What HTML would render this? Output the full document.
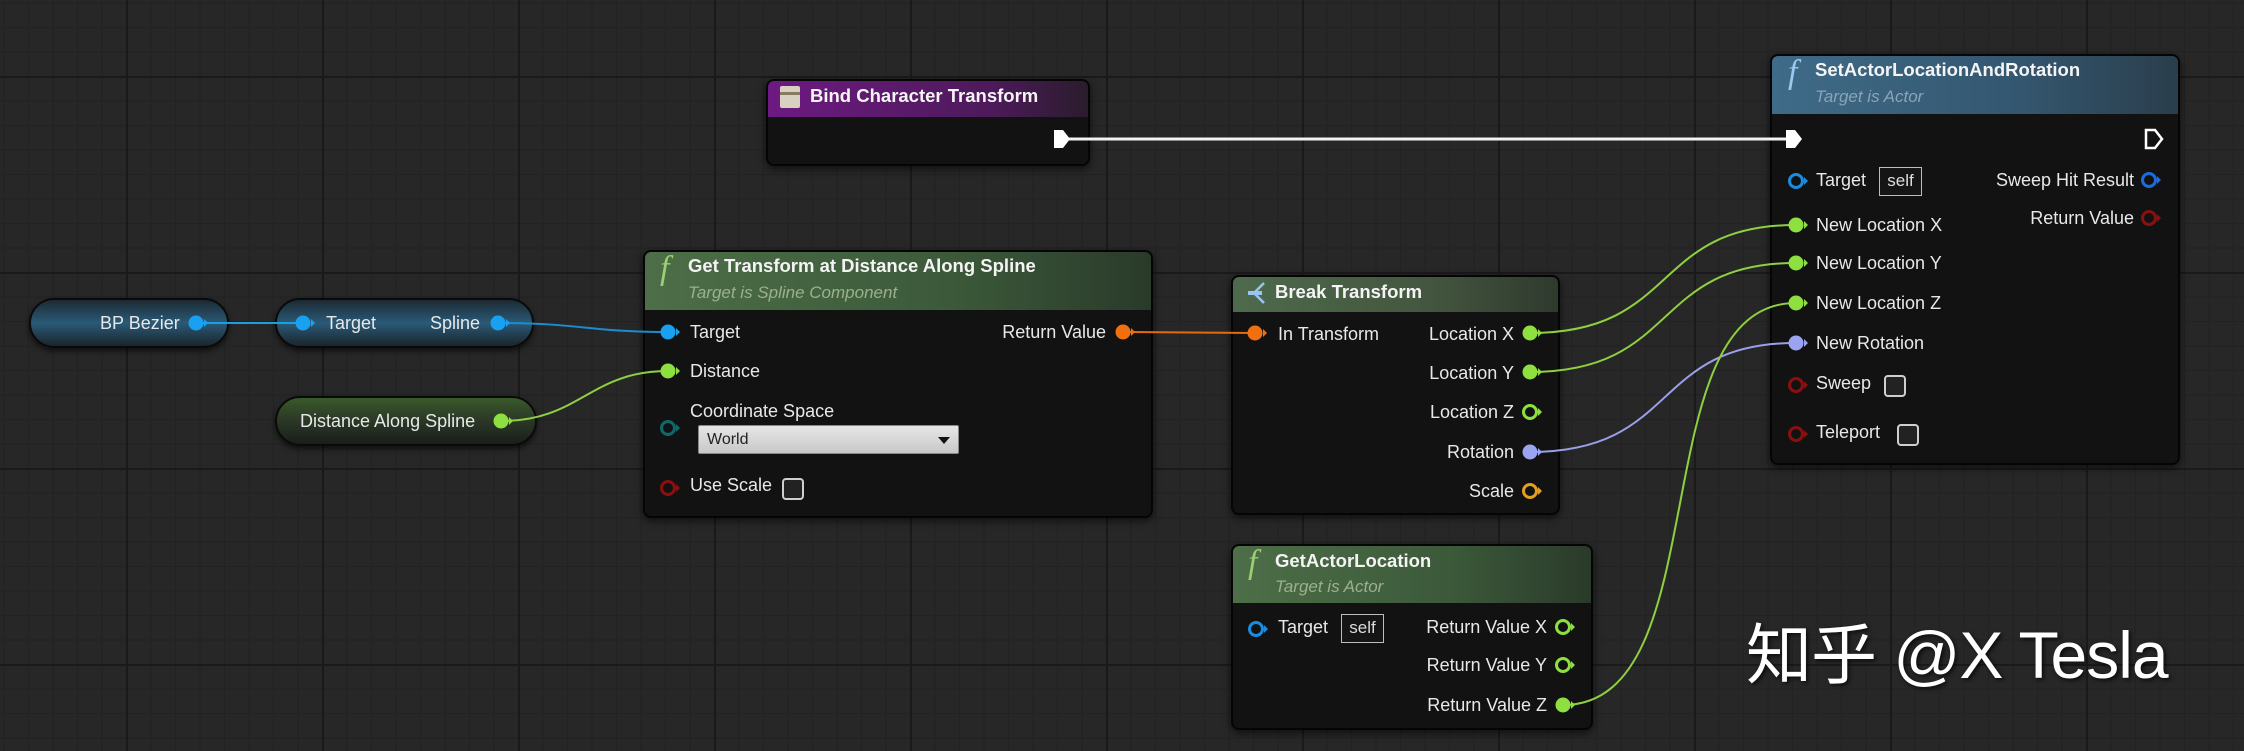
<!DOCTYPE html>
<html><head><meta charset="utf-8"><style>
*{margin:0;padding:0;box-sizing:border-box}
body{width:2244px;height:751px;overflow:hidden;background:#272727;font-family:"Liberation Sans",sans-serif;position:relative}
#grid{position:absolute;inset:0;
background-image:
linear-gradient(#1a1a1a 2px,transparent 2px),
linear-gradient(90deg,#1a1a1a 2px,transparent 2px),
linear-gradient(#222 1px,transparent 1px),
linear-gradient(90deg,#222 1px,transparent 1px);
background-size:196px 196px,196px 196px,24.5px 24.5px,24.5px 24.5px;
background-position:0 76px,126px 0,0 76px,126px 0;}
.node{position:absolute;background:#121212;border:2px solid #050505;border-radius:8px;box-shadow:0 3px 8px rgba(0,0,0,.6);overflow:hidden}
.hdr{position:absolute;left:0;right:0;top:0}
.t{position:absolute;color:#e8e8e8;font-size:18px;line-height:24px;white-space:nowrap}
.r{text-align:right}
.b{font-weight:bold;color:#f4f4f4;font-size:18.5px}
.i{font-style:italic;font-size:17px}
.f{position:absolute;font-size:34px;line-height:34px;font-style:italic;font-family:'Liberation Serif',serif}
.pill{position:absolute;height:50px;border-radius:25px;border:2px solid #0a0a0a;box-shadow:0 3px 6px rgba(0,0,0,.6)}
.cb{position:absolute;width:22px;height:22px;border:2.5px solid #cfcfcf;border-radius:4px;background:#222}
.self{position:absolute;border:1.5px solid #bdbdbd;color:#ddd;font-size:17px;line-height:26px;text-align:center;background:#151515}
</style></head><body>
<div id="grid"></div>

<div class="node" style="left:766px;top:79px;width:324px;height:87px">
 <div class="hdr" style="height:36px;background:linear-gradient(90deg,#6d1a82,#4d1a5a 70%,#2a1c2c)"></div>
</div>
<div class="node" style="left:643px;top:250px;width:510px;height:268px">
 <div class="hdr" style="height:58px;background:linear-gradient(90deg,#4d6e48,#3c5a3a 60%,#2a3a2a)"></div>
</div>
<div class="node" style="left:1770px;top:54px;width:410px;height:411px">
 <div class="hdr" style="height:58px;background:linear-gradient(90deg,#3f6b88,#345770 60%,#2a3e4c)"></div>
</div>
<div class="node" style="left:1231px;top:275px;width:329px;height:240px">
 <div class="hdr" style="height:35px;background:linear-gradient(90deg,#4e6a4c,#44563f 60%,#2f3a2e)"></div>
</div>
<div class="node" style="left:1231px;top:544px;width:362px;height:186px">
 <div class="hdr" style="height:57px;background:linear-gradient(90deg,#4d6e48,#3c5a3a 60%,#2a3a2a)"></div>
</div>

<div class="pill" style="left:29px;top:298px;width:200px;background:linear-gradient(#1c2a33,#2a5a78 50%,#1a242a)"></div>
<div class="pill" style="left:275px;top:298px;width:259px;background:linear-gradient(#1c2a33,#2a5a78 50%,#1a242a)"></div>
<div class="pill" style="left:275px;top:396px;width:262px;background:linear-gradient(#3a5a2a,#2c3a27 45%,#1a1e1a)"></div>

<svg width="2244" height="751" style="position:absolute;left:0;top:0">
 <g fill="none">
  <path d="M1064 139 L1790 139" stroke="#f2f2f2" stroke-width="3"/>
  <path d="M196 323 L303 323" stroke="#1aa0e0" stroke-width="2"/>
  <path d="M498 323 C580 323 590 332 668 332" stroke="#1a8cd0" stroke-width="2"/>
  <path d="M501 421 C580 421 590 371 668 371" stroke="#8ed040" stroke-width="2"/>
  <path d="M1123 332 L1255 333" stroke="#e86a10" stroke-width="2"/>
  <path d="M1530 333 C1680 333 1650 225 1796 225" stroke="#8ed040" stroke-width="2"/>
  <path d="M1530 372 C1680 372 1650 263 1796 263" stroke="#8ed040" stroke-width="2"/>
  <path d="M1530 452 C1680 452 1650 343 1796 343" stroke="#9aa0e8" stroke-width="2"/>
  <path d="M1563 705 C1720 705 1640 303 1796 303" stroke="#8ed040" stroke-width="2"/>
 </g>
 <path d="M1054 130 h9 l7 9 l-7 9 h-9z" fill="#fff"/>
 <path d="M1786 130 h9 l7 9 l-7 9 h-9z" fill="#fff"/>
 <path d="M2146 130 h9 l7 9 l-7 9 h-9z" fill="none" stroke="#fff" stroke-width="2.5"/>
 <defs>
  <g id="pf"><circle r="7.5"/><path d="M8 -4 L12 0 L8 4Z"/></g>
  <g id="ph"><circle r="6.5" fill="none" stroke-width="3"/><path d="M8 -4 L12 0 L8 4Z" stroke="none"/></g>
 </defs>
 <use href="#pf" x="196" y="323" fill="#1aa0f0"/>
 <use href="#pf" x="303" y="323" fill="#1aa0f0"/>
 <use href="#pf" x="498" y="323" fill="#1aa0f0"/>
 <use href="#pf" x="501" y="421" fill="#8ee040"/>
 <use href="#pf" x="668" y="332" fill="#1aa0f0"/>
 <use href="#pf" x="668" y="371" fill="#8ee040"/>
 <use href="#ph" x="668" y="428" fill="#0e6a6a" stroke="#0e6a6a"/>
 <use href="#ph" x="668" y="488" fill="#8a1010" stroke="#8a1010"/>
 <use href="#pf" x="1123" y="332" fill="#f07010"/>
 <use href="#pf" x="1255" y="333" fill="#f07010"/>
 <use href="#pf" x="1530" y="333" fill="#8ee040"/>
 <use href="#pf" x="1530" y="372" fill="#8ee040"/>
 <use href="#ph" x="1530" y="412" fill="#8ee040" stroke="#8ee040"/>
 <use href="#pf" x="1530" y="452" fill="#9aa4f0"/>
 <use href="#ph" x="1530" y="491" fill="#e0a020" stroke="#e0a020"/>
 <use href="#ph" x="1796" y="181" fill="#1a8ce0" stroke="#1a8ce0"/>
 <use href="#pf" x="1796" y="225" fill="#8ee040"/>
 <use href="#pf" x="1796" y="263" fill="#8ee040"/>
 <use href="#pf" x="1796" y="303" fill="#8ee040"/>
 <use href="#pf" x="1796" y="343" fill="#9aa4f0"/>
 <use href="#ph" x="1796" y="385" fill="#8a1010" stroke="#8a1010"/>
 <use href="#ph" x="1796" y="434" fill="#8a1010" stroke="#8a1010"/>
 <use href="#ph" x="2149" y="180" fill="#1a6ce0" stroke="#1a6ce0"/>
 <use href="#ph" x="2149" y="218" fill="#8a1010" stroke="#8a1010"/>
 <use href="#ph" x="1256" y="629" fill="#1a8ce0" stroke="#1a8ce0"/>
 <use href="#ph" x="1563" y="627" fill="#8ee040" stroke="#8ee040"/>
 <use href="#ph" x="1563" y="665" fill="#8ee040" stroke="#8ee040"/>
 <use href="#pf" x="1563" y="705" fill="#8ee040"/>
 <rect x="780" y="86" width="20" height="22" rx="2" fill="#d8d0c0"/>
 <rect x="780" y="92" width="20" height="3" fill="#8a7a60"/>
 <path d="M1248 293 L1262 293" stroke="#9ac4f0" stroke-width="4"/>
 <path d="M1254 293 L1264 283 M1254 293 L1264 303" stroke="#9ac4f0" stroke-width="2.5" fill="none"/>
</svg>

<div class="t b" style="left:810px;top:84px">Bind Character Transform</div>

<div class="f" style="left:660px;top:252px;color:#9ad070">f</div>
<div class="t b" style="left:688px;top:254px">Get Transform at Distance Along Spline</div>
<div class="t i" style="left:688px;top:281px;color:#9cb08c">Target is Spline Component</div>
<div class="t" style="left:690px;top:320px">Target</div>
<div class="t r" style="left:900px;width:206px;top:320px">Return Value</div>
<div class="t" style="left:690px;top:359px">Distance</div>
<div class="t" style="left:690px;top:399px">Coordinate Space</div>
<div style="position:absolute;left:698px;top:425px;width:261px;height:29px;background:linear-gradient(#e6e6e6,#c8c8c8);border:1px solid #888;border-radius:2px;color:#222;font-size:16px;line-height:27px;padding-left:8px">World<span style="position:absolute;right:8px;top:11px;border-left:6px solid transparent;border-right:6px solid transparent;border-top:7px solid #111"></span></div>
<div class="t" style="left:690px;top:473px">Use Scale</div>
<div class="cb" style="left:782px;top:478px"></div>

<div class="f" style="left:1788px;top:56px;color:#9ac8f0">f</div>
<div class="t b" style="left:1815px;top:58px">SetActorLocationAndRotation</div>
<div class="t i" style="left:1815px;top:85px;color:#8aa4b8">Target is Actor</div>
<div class="t" style="left:1816px;top:168px">Target</div>
<div class="self" style="left:1879px;top:167px;width:43px;height:29px">self</div>
<div class="t r" style="left:1900px;width:234px;top:168px">Sweep Hit Result</div>
<div class="t r" style="left:1900px;width:234px;top:206px">Return Value</div>
<div class="t" style="left:1816px;top:213px">New Location X</div>
<div class="t" style="left:1816px;top:251px">New Location Y</div>
<div class="t" style="left:1816px;top:291px">New Location Z</div>
<div class="t" style="left:1816px;top:331px">New Rotation</div>
<div class="t" style="left:1816px;top:371px">Sweep</div>
<div class="cb" style="left:1884px;top:375px"></div>
<div class="t" style="left:1816px;top:420px">Teleport</div>
<div class="cb" style="left:1897px;top:424px"></div>

<div class="t b" style="left:1275px;top:280px">Break Transform</div>
<div class="t" style="left:1278px;top:322px">In Transform</div>
<div class="t r" style="left:1380px;width:134px;top:322px">Location X</div>
<div class="t r" style="left:1380px;width:134px;top:361px">Location Y</div>
<div class="t r" style="left:1380px;width:134px;top:400px">Location Z</div>
<div class="t r" style="left:1380px;width:134px;top:440px">Rotation</div>
<div class="t r" style="left:1380px;width:134px;top:479px">Scale</div>

<div class="f" style="left:1248px;top:546px;color:#9ad070">f</div>
<div class="t b" style="left:1275px;top:549px">GetActorLocation</div>
<div class="t i" style="left:1275px;top:575px;color:#9cb08c">Target is Actor</div>
<div class="t" style="left:1278px;top:615px">Target</div>
<div class="self" style="left:1341px;top:614px;width:43px;height:29px">self</div>
<div class="t r" style="left:1400px;width:147px;top:615px">Return Value X</div>
<div class="t r" style="left:1400px;width:147px;top:653px">Return Value Y</div>
<div class="t r" style="left:1400px;width:147px;top:693px">Return Value Z</div>

<div class="t" style="left:100px;top:311px">BP Bezier</div>
<div class="t" style="left:326px;top:311px">Target</div>
<div class="t" style="left:430px;top:311px">Spline</div>
<div class="t" style="left:300px;top:409px">Distance Along Spline</div>

<div style="position:absolute;left:1746px;top:610px;color:#fff;font-size:66px;line-height:90px;letter-spacing:-1px;font-family:'Liberation Sans','Noto Sans CJK SC',sans-serif;text-shadow:2px 2px 4px rgba(0,0,0,.7);white-space:nowrap">知乎 @X Tesla</div>
</body></html>
